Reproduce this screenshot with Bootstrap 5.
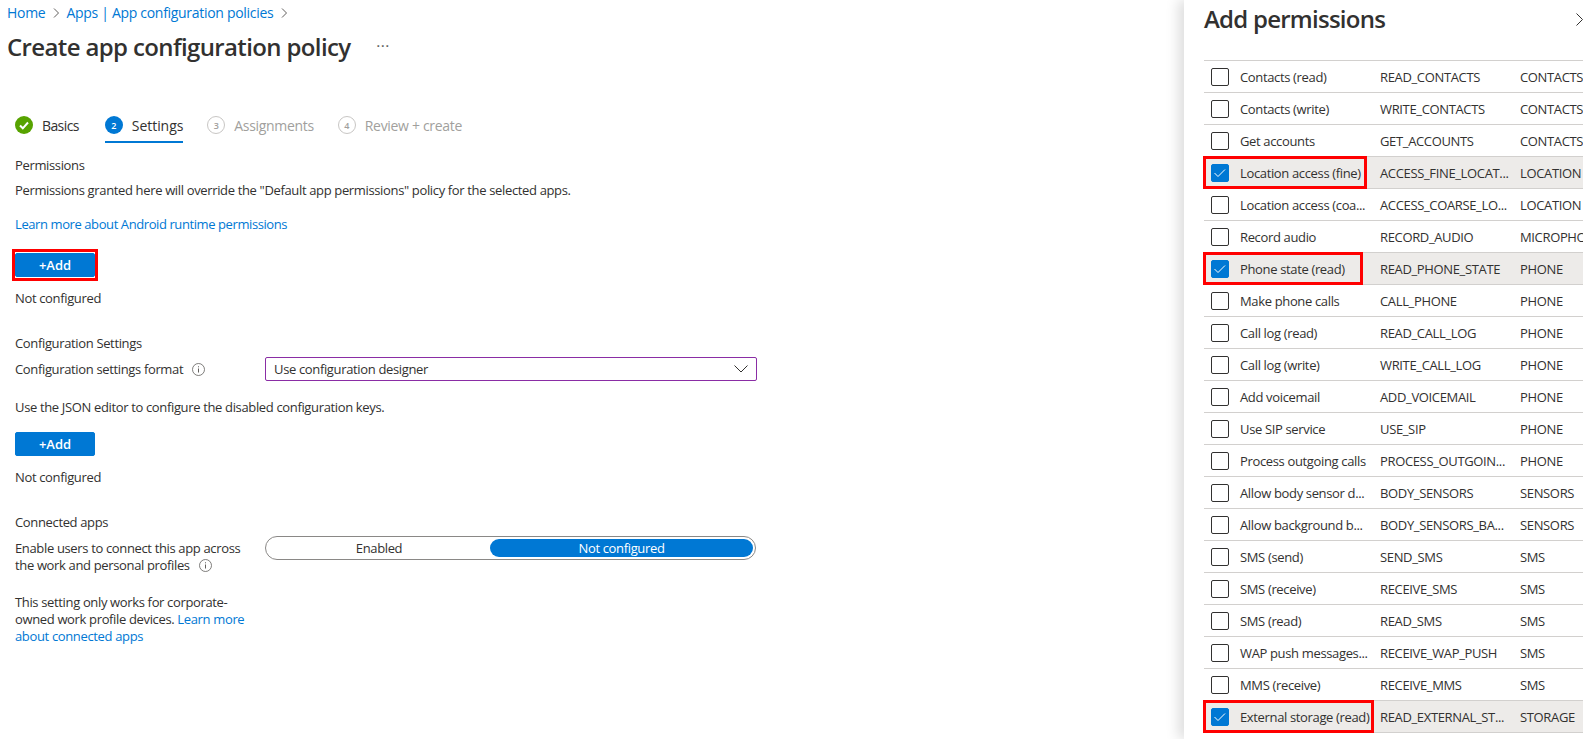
<!DOCTYPE html>
<html lang="en"><head><meta charset="utf-8"><title>Create app configuration policy</title>
<link href="https://cdn.jsdelivr.net/npm/bootstrap@5.3.0/dist/css/bootstrap.min.css" rel="stylesheet">
<style>
body{font-family:"Open Sans","Noto Sans",sans-serif;font-size:13px;line-height:18px;color:#323130;letter-spacing:-.35px;background:#fff;overflow:hidden}
a{color:#0078d4;text-decoration:none}
.page-wrap{height:739px;overflow:hidden}
.main-pane{padding-left:15px;min-width:0}
.crumbs{margin:4px 0 0 -8px;font-size:14px;letter-spacing:-.3px}
.crumbs .sep{margin:0 7px 0 8px;display:inline-flex}
.page-title{font-size:24px;line-height:32px;font-weight:600;margin:9px 0 0 -8px;letter-spacing:-.63px}
.title-more{margin-left:26px;color:#605e5c;font-size:13px;letter-spacing:1px;line-height:18px;position:relative;top:-1px}
.steps{margin-top:53px;font-size:14px;letter-spacing:-.32px}
.step{padding-bottom:6px;border-bottom:2px solid transparent;gap:9px}
.step-txt{margin-top:1px}
.step:first-child{padding-right:2px}
.step:first-child .step-txt{letter-spacing:-.6px}
.step.on .step-txt{letter-spacing:-.05px}
.step.on{border-bottom-color:#0078d4}
.step.off{color:#a19f9d}
.step-dot{width:18px;height:18px;border-radius:50%;font-size:9px;font-weight:600;line-height:1;letter-spacing:0}
.dot-cur{background:#0078d4;color:#fff}
.dot-off{border:1px solid #c8c6c4;color:#a19f9d}
.t1{margin-top:13px}.t2{margin-top:7px}.t3{margin-top:16px;letter-spacing:-.41px}.t4{margin-top:20px}.t5{margin-top:12px}.t6{margin-top:27px}.t7{margin-top:5px}.t8{margin-top:17px}.t9{margin-top:16px}
.az-btn{--bs-btn-bg:#0078d4;--bs-btn-border-color:#0078d4;--bs-btn-hover-bg:#106ebe;--bs-btn-font-size:13px;--bs-btn-font-weight:600;--bs-btn-padding-y:0;--bs-btn-padding-x:0;--bs-btn-border-radius:2px;--bs-btn-line-height:22px;width:80px;height:24px;display:block}
.mark-wrap{width:80px}
.red-box{position:absolute;border:3px solid #f00;pointer-events:none}
.rb-add{left:-3px;top:-4px;width:86px;height:32px}
.lbl-col{width:250px;flex:none}
.info{margin-left:9px;vertical-align:-2px}
.sel-box{width:492px;height:24px;border:1px solid #8a2da5;border-radius:2px;padding:0 8px}
.tog{width:491px;height:24px;border:1px solid #8a8886;border-radius:12px;padding:2px}
.tog-a{width:222px}
.tog-b{width:263px;height:18px;border-radius:9px;background:#0078d4;color:#fff}
.lh17{line-height:17px;padding-top:4px}
.conn-note{line-height:17px;margin-top:20px}
.side-pane{width:399px;flex:none;height:739px;overflow:hidden;padding-left:20px;box-shadow:-6px 0 12px rgba(0,0,0,.13);background:#fff;position:relative}
.side-title{font-size:24px;line-height:32px;font-weight:600;margin:3px 0 0;letter-spacing:-.75px}
.close-x{position:absolute;right:0;top:13px}
.perm-table{width:420px;table-layout:fixed;margin:25px 0 0;border-collapse:collapse;--bs-table-color:#323130}
.perm-table td{height:32px;padding:0;border-bottom:1px solid #d2d0ce;vertical-align:middle;white-space:nowrap;overflow:visible;background:transparent}
.perm-table tr:first-child td{border-top:1px solid #d2d0ce}
.perm-table tr.picked td{background:#edebe9}
.perm-table .c0{width:36px;position:relative}
.perm-table .c1,.perm-table .c2,.perm-table .c3{width:140px}
.chk{display:block;width:18px;height:18px;margin-left:7px;border:1px solid #323130;border-radius:2px}
.chk.yes{background:#0078d4;border-color:#0078d4}
.chk svg{display:block}
.rb-t{left:-1px;top:-1px;height:33px}
.w1{width:164px}.w2{width:160px}.w3{width:171px}
</style></head><body>
<div class="d-flex page-wrap">
<main class="main-pane flex-grow-1">
<nav class="crumbs d-flex align-items-center"><a href="#">Home</a><span class="sep"><svg width="6" height="10" viewBox="0 0 6 10"><path d="M1 .5 5.500 5 1 9.500" fill="none" stroke="#605e5c"/></svg></span><a href="#">Apps | App configuration policies</a><span class="sep"><svg width="6" height="10" viewBox="0 0 6 10"><path d="M1 .5 5.500 5 1 9.500" fill="none" stroke="#605e5c"/></svg></span></nav>
<h1 class="page-title d-flex align-items-center">Create app configuration policy<span class="title-more">···</span></h1>
<div class="steps d-flex gap-4">
<div class="step d-flex align-items-start"><svg width="18" height="18" viewBox="0 0 18 18"><circle cx="9" cy="9" r="9" fill="#57a300"/><path d="M5 9.500 7.800 12.300 13 6.500" fill="none" stroke="#fff" stroke-width="2"/></svg><span class="step-txt">Basics</span></div>
<div class="step on d-flex align-items-start"><span class="step-dot dot-cur d-flex align-items-center justify-content-center">2</span><span class="step-txt">Settings</span></div>
<div class="step off d-flex align-items-start"><span class="step-dot dot-off d-flex align-items-center justify-content-center">3</span><span class="step-txt">Assignments</span></div>
<div class="step off d-flex align-items-start"><span class="step-dot dot-off d-flex align-items-center justify-content-center">4</span><span class="step-txt">Review + create</span></div>
</div>
<div class="t1">Permissions</div>
<div class="t2">Permissions granted here will override the "Default app permissions" policy for the selected apps.</div>
<div class="t3"><a href="#">Learn more about Android runtime permissions</a></div>
<div class="t4 mark-wrap position-relative"><button class="btn btn-primary az-btn" type="button">+Add</button><span class="red-box rb-add"></span></div>
<div class="t5">Not configured</div>
<div class="t6">Configuration Settings</div>
<div class="t7 d-flex align-items-center">
<div class="lbl-col">Configuration settings format<svg class="info" width="13" height="13" viewBox="0 0 13 13"><circle cx="6.500" cy="6.500" r="6" fill="none" stroke="#605e5c" stroke-width=".8"/><path d="M6.500 5.500v4M6.500 3.300v1" stroke="#605e5c"/></svg></div>
<div class="sel-box d-flex align-items-center justify-content-between"><span>Use configuration designer</span><svg width="14" height="8" viewBox="0 0 14 8"><path d="M.5.500 7 7 13.500.500" fill="none" stroke="#323130"/></svg></div>
</div>
<div class="t8">Use the JSON editor to configure the disabled configuration keys.</div>
<div class="t9"><button class="btn btn-primary az-btn" type="button">+Add</button></div>
<div class="t5">Not configured</div>
<div class="t6">Connected apps</div>
<div class="t7 d-flex">
<div class="lbl-col lh17">Enable users to connect this app across<br>the work and personal profiles<svg class="info" width="13" height="13" viewBox="0 0 13 13"><circle cx="6.500" cy="6.500" r="6" fill="none" stroke="#605e5c" stroke-width=".8"/><path d="M6.500 5.500v4M6.500 3.300v1" stroke="#605e5c"/></svg></div>
<div class="tog d-flex align-items-center"><span class="tog-a text-center">Enabled</span><span class="tog-b text-center">Not configured</span></div>
</div>
<div class="conn-note">This setting only works for corporate-<br>owned work profile devices. <a href="#">Learn more<br>about connected apps</a></div>
</main>
<aside class="side-pane">
<h2 class="side-title">Add permissions</h2>
<svg class="close-x" width="7" height="13" viewBox="0 0 7 13"><path d="M.5.500 6.500 6.500.5 12.500" fill="none" stroke="#323130"/></svg>
<table class="perm-table"><tbody>
<tr><td class="c0"><span class="chk"></span></td><td class="c1">Contacts (read)</td><td class="c2">READ_CONTACTS</td><td class="c3">CONTACTS</td></tr>
<tr><td class="c0"><span class="chk"></span></td><td>Contacts (write)</td><td>WRITE_CONTACTS</td><td>CONTACTS</td></tr>
<tr><td class="c0"><span class="chk"></span></td><td>Get accounts</td><td>GET_ACCOUNTS</td><td>CONTACTS</td></tr>
<tr class="picked"><td class="c0"><span class="chk yes"><svg width="16" height="16" viewBox="0 0 16 16"><path d="M2.500 8 6 11.500 13 4.500" fill="none" stroke="#fff"/></svg></span><span class="red-box rb-t w1"></span></td><td>Location access (fine)</td><td>ACCESS_FINE_LOCAT...</td><td>LOCATION</td></tr>
<tr><td class="c0"><span class="chk"></span></td><td>Location access (coa...</td><td>ACCESS_COARSE_LO...</td><td>LOCATION</td></tr>
<tr><td class="c0"><span class="chk"></span></td><td>Record audio</td><td>RECORD_AUDIO</td><td>MICROPHONE</td></tr>
<tr class="picked"><td class="c0"><span class="chk yes"><svg width="16" height="16" viewBox="0 0 16 16"><path d="M2.500 8 6 11.500 13 4.500" fill="none" stroke="#fff"/></svg></span><span class="red-box rb-t w2"></span></td><td>Phone state (read)</td><td>READ_PHONE_STATE</td><td>PHONE</td></tr>
<tr><td class="c0"><span class="chk"></span></td><td>Make phone calls</td><td>CALL_PHONE</td><td>PHONE</td></tr>
<tr><td class="c0"><span class="chk"></span></td><td>Call log (read)</td><td>READ_CALL_LOG</td><td>PHONE</td></tr>
<tr><td class="c0"><span class="chk"></span></td><td>Call log (write)</td><td>WRITE_CALL_LOG</td><td>PHONE</td></tr>
<tr><td class="c0"><span class="chk"></span></td><td>Add voicemail</td><td>ADD_VOICEMAIL</td><td>PHONE</td></tr>
<tr><td class="c0"><span class="chk"></span></td><td>Use SIP service</td><td>USE_SIP</td><td>PHONE</td></tr>
<tr><td class="c0"><span class="chk"></span></td><td>Process outgoing calls</td><td>PROCESS_OUTGOIN...</td><td>PHONE</td></tr>
<tr><td class="c0"><span class="chk"></span></td><td>Allow body sensor d...</td><td>BODY_SENSORS</td><td>SENSORS</td></tr>
<tr><td class="c0"><span class="chk"></span></td><td>Allow background b...</td><td>BODY_SENSORS_BA...</td><td>SENSORS</td></tr>
<tr><td class="c0"><span class="chk"></span></td><td>SMS (send)</td><td>SEND_SMS</td><td>SMS</td></tr>
<tr><td class="c0"><span class="chk"></span></td><td>SMS (receive)</td><td>RECEIVE_SMS</td><td>SMS</td></tr>
<tr><td class="c0"><span class="chk"></span></td><td>SMS (read)</td><td>READ_SMS</td><td>SMS</td></tr>
<tr><td class="c0"><span class="chk"></span></td><td>WAP push messages...</td><td>RECEIVE_WAP_PUSH</td><td>SMS</td></tr>
<tr><td class="c0"><span class="chk"></span></td><td>MMS (receive)</td><td>RECEIVE_MMS</td><td>SMS</td></tr>
<tr class="picked"><td class="c0"><span class="chk yes"><svg width="16" height="16" viewBox="0 0 16 16"><path d="M2.500 8 6 11.500 13 4.500" fill="none" stroke="#fff"/></svg></span><span class="red-box rb-t w3"></span></td><td>External storage (read)</td><td>READ_EXTERNAL_ST...</td><td>STORAGE</td></tr>
</tbody></table>
</aside>
</div>
<script src="https://cdn.jsdelivr.net/npm/bootstrap@5.3.0/dist/js/bootstrap.bundle.min.js"></script>
</body></html>
